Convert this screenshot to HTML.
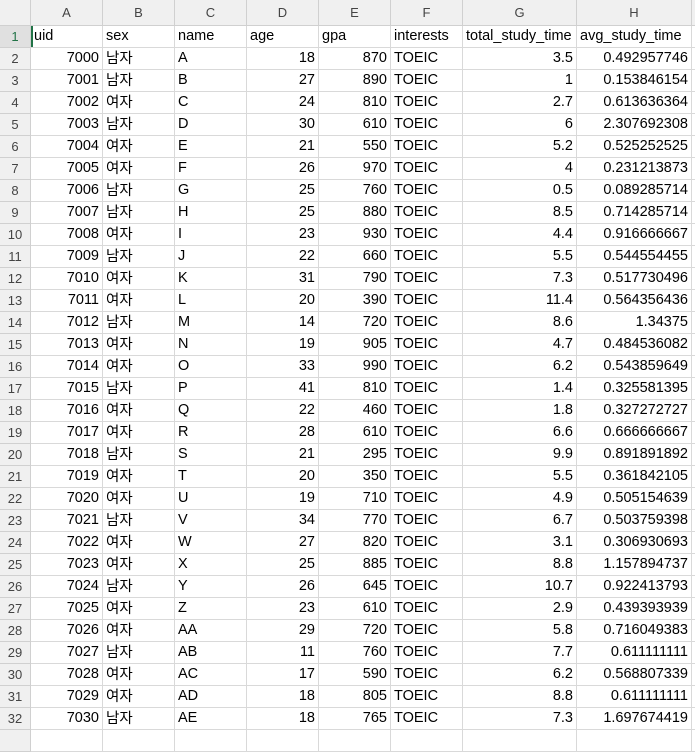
<!DOCTYPE html><html><head><meta charset="utf-8"><style>
body{margin:0;width:695px;height:737px;overflow:hidden;background:#fff;font-family:"Liberation Sans","Noto Sans CJK KR",sans-serif;position:relative;}
.c{position:absolute;box-sizing:border-box;border-right:1px solid #d9d9d9;border-bottom:1px solid #d9d9d9;padding:0 3px;font-size:14.5px;line-height:21px;white-space:nowrap;overflow:hidden;color:#000;}
.hd{background:#f0f0f0;color:#444;text-align:center;font-size:13px;border-color:#d0d0d0;}
.r{text-align:right;}
.k{padding-top:1px;}
</style></head><body>
<script>
var X=[0,31,103,175,247,319,391,463,577,692,700];
var d=[["남자","A",18,870,3.5,"0.492957746"],["남자","B",27,890,1,"0.153846154"],["여자","C",24,810,2.7,"0.613636364"],["남자","D",30,610,6,"2.307692308"],["여자","E",21,550,5.2,"0.525252525"],["여자","F",26,970,4,"0.231213873"],["남자","G",25,760,0.5,"0.089285714"],["남자","H",25,880,8.5,"0.714285714"],["여자","I",23,930,4.4,"0.916666667"],["남자","J",22,660,5.5,"0.544554455"],["여자","K",31,790,7.3,"0.517730496"],["여자","L",20,390,11.4,"0.564356436"],["남자","M",14,720,8.6,"1.34375"],["여자","N",19,905,4.7,"0.484536082"],["여자","O",33,990,6.2,"0.543859649"],["남자","P",41,810,1.4,"0.325581395"],["여자","Q",22,460,1.8,"0.327272727"],["여자","R",28,610,6.6,"0.666666667"],["남자","S",21,295,9.9,"0.891891892"],["여자","T",20,350,5.5,"0.361842105"],["여자","U",19,710,4.9,"0.505154639"],["남자","V",34,770,6.7,"0.503759398"],["여자","W",27,820,3.1,"0.306930693"],["여자","X",25,885,8.8,"1.157894737"],["남자","Y",26,645,10.7,"0.922413793"],["여자","Z",23,610,2.9,"0.439393939"],["여자","AA",29,720,5.8,"0.716049383"],["남자","AB",11,760,7.7,"0.611111111"],["여자","AC",17,590,6.2,"0.568807339"],["여자","AD",18,805,8.8,"0.611111111"],["남자","AE",18,765,7.3,"1.697674419"]];
var rows=[["","A","B","C","D","E","F","G","H",""],["1","uid","sex","name","age","gpa","interests","total_study_time","avg_study_time",""]];
d.forEach(function(r,i){rows.push([i+2,7000+i,r[0],r[1],r[2],r[3],"TOEIC",r[4],r[5],""]);});
rows.push(["","","","","","","","","",""]);
var h="";
rows.forEach(function(r,ri){
 var y=ri==0?0:26+(ri-1)*22, ht=ri==0?26:22;
 for(var c=0;c<10;c++){
  var cls="c";
  if(ri==0||c==0)cls+=" hd";
  else if(ri>1&&[1,4,5,7,8].indexOf(c)>=0)cls+=" r";
  if(ri>1&&c==2)cls+=" k";
  var st="left:"+X[c]+"px;top:"+y+"px;width:"+(X[c+1]-X[c])+"px;height:"+ht+"px;line-height:"+(ht-1)+"px;";
  if(ri==1&&c==0)st+="background:#e0e0e0;color:#217346;";
  if(ri==1&&c==1)st+="box-shadow:inset 2px 0 #217346;";
  h+='<div class="'+cls+'" style="'+st+'">'+r[c]+'</div>';
 }
});
document.write(h);
</script>
</body></html>
